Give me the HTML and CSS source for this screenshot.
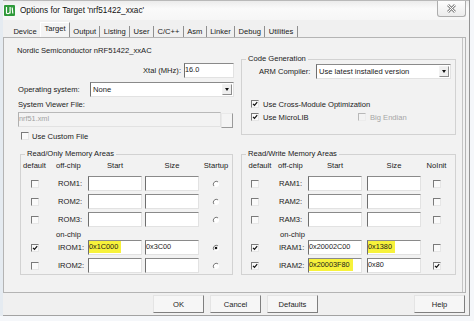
FILE: index.html
```html
<!DOCTYPE html>
<html>
<head>
	<meta charset="utf-8">
	<title>Options for Target</title>
	<link rel="stylesheet" href="styles.css">
</head>
<body>
	<div class="window">
		<div class="titlebar">
			<span class="app-icon">
				<svg width="11" height="11" viewBox="0 0 11 11">
					<rect x="0" y="0" width="11" height="11" rx="1" fill="#2f9a3a"/>
					<path d="M2.5 2v6.5M2.5 8.2c1.5 0.8 3 0.3 3.6-1.2M6.1 2v6.6M8.2 2.5l0.6 6" fill="none" stroke="#fff" stroke-width="1.2"/>
				</svg>
			</span>
			<span class="title">Options for Target 'nrf51422_xxac'</span>
			<span class="close-btn">
				<svg width="11" height="9" viewBox="0 0 11 9">
					<path d="M2 1L9 8M9 1L2 8" stroke="#8c8c8c" stroke-width="2.8"/>
					<path d="M2 1L9 8M9 1L2 8" stroke="#fff" stroke-width="1"/>
				</svg>
			</span>
		</div>

		<div class="client">
			<div class="tabs">
				<span class="tab first">Device</span>
				<span class="tab active">Target</span>
				<span class="tab">Output</span>
				<span class="tab">Listing</span>
				<span class="tab">User</span>
				<span class="tab">C/C++</span>
				<span class="tab">Asm</span>
				<span class="tab">Linker</span>
				<span class="tab">Debug</span>
				<span class="tab">Utilities</span>
			</div>

			<div class="panel">
				<div class="device-name">Nordic Semiconductor nRF51422_xxAC</div>

				<div class="top-row">
					<div class="left-col">
						<div class="xtal-row">
							<label>Xtal (MHz):</label>
							<div class="field xtal-ipt"><span class="val">16.0</span></div>
						</div>
						<div class="os-row">
							<label>Operating system:</label>
							<div class="select"><span class="sel-text">None</span><span class="drop"></span></div>
						</div>
						<div class="svf-label">System Viewer File:</div>
						<div class="svf-row">
							<div class="field disabled"><span class="val">nrf51.xml</span></div>
							<span class="browse-btn"></span>
						</div>
						<div class="check-row custom-file">
							<span class="chk"></span><label>Use Custom File</label>
						</div>
					</div>

					<fieldset class="group codegen">
						<legend>Code Generation</legend>
						<div class="arm-row">
							<label>ARM Compiler:</label>
							<div class="select"><span class="sel-text">Use latest installed version</span><span class="drop"></span></div>
						</div>
						<div class="check-row cross-opt">
							<span class="chk on"><svg viewBox="0 0 6 6"><path d="M1 2.8L2.5 4.4L5.2 1.2" fill="none" stroke="#111" stroke-width="1.2"/></svg></span>
							<label>Use Cross-Module Optimization</label>
						</div>
						<div class="check-pair">
							<div class="check-row">
								<span class="chk on"><svg viewBox="0 0 6 6"><path d="M1 2.8L2.5 4.4L5.2 1.2" fill="none" stroke="#111" stroke-width="1.2"/></svg></span>
								<label>Use MicroLIB</label>
							</div>
							<div class="check-row off">
								<span class="chk"></span>
								<label>Big Endian</label>
							</div>
						</div>
					</fieldset>
				</div>

				<div class="mem-row">
					<fieldset class="group mem-group ro">
						<legend>Read/Only Memory Areas</legend>
						<div class="mem-grid">
							<span class="hd">default</span>
							<span class="hd chip">off-chip</span>
							<span class="hd num">Start</span>
							<span class="hd num">Size</span>
							<span class="hd">Startup</span>

							<span class="def"><span class="chk"></span></span>
							<span class="lbl">ROM1:</span>
							<div class="field"></div>
							<div class="field"></div>
							<span class="opt"><svg class="radio" viewBox="0 0 8 8"><circle cx="4" cy="4" r="3" fill="#fff"/><path d="M6.1 1.9A3 3 0 0 0 1.9 6.1" fill="none" stroke="#6a6a6a" stroke-width="0.9"/></svg></span>

							<span class="def"><span class="chk"></span></span>
							<span class="lbl">ROM2:</span>
							<div class="field"></div>
							<div class="field"></div>
							<span class="opt"><svg class="radio" viewBox="0 0 8 8"><circle cx="4" cy="4" r="3" fill="#fff"/><path d="M6.1 1.9A3 3 0 0 0 1.9 6.1" fill="none" stroke="#6a6a6a" stroke-width="0.9"/></svg></span>

							<span class="def"><span class="chk"></span></span>
							<span class="lbl">ROM3:</span>
							<div class="field"></div>
							<div class="field"></div>
							<span class="opt"><svg class="radio" viewBox="0 0 8 8"><circle cx="4" cy="4" r="3" fill="#fff"/><path d="M6.1 1.9A3 3 0 0 0 1.9 6.1" fill="none" stroke="#6a6a6a" stroke-width="0.9"/></svg></span>

							<span class="hd onchip">on-chip</span>

							<span class="def row-start"><span class="chk on"><svg viewBox="0 0 6 6"><path d="M1 2.8L2.5 4.4L5.2 1.2" fill="none" stroke="#111" stroke-width="1.2"/></svg></span></span>
							<span class="lbl">IROM1:</span>
							<div class="field"><span class="val hl">0x1C000</span></div>
							<div class="field"><span class="val">0x3C00</span></div>
							<span class="opt"><svg class="radio" viewBox="0 0 8 8"><circle cx="4" cy="4" r="3" fill="#fff"/><path d="M6.1 1.9A3 3 0 0 0 1.9 6.1" fill="none" stroke="#6a6a6a" stroke-width="0.9"/><circle cx="4" cy="4" r="1.3" fill="#111"/></svg></span>

							<span class="def"><span class="chk"></span></span>
							<span class="lbl">IROM2:</span>
							<div class="field"></div>
							<div class="field"></div>
							<span class="opt"><svg class="radio" viewBox="0 0 8 8"><circle cx="4" cy="4" r="3" fill="#fff"/><path d="M6.1 1.9A3 3 0 0 0 1.9 6.1" fill="none" stroke="#6a6a6a" stroke-width="0.9"/></svg></span>
						</div>
					</fieldset>

					<fieldset class="group mem-group rw">
						<legend>Read/Write Memory Areas</legend>
						<div class="mem-grid">
							<span class="hd">default</span>
							<span class="hd chip">off-chip</span>
							<span class="hd num">Start</span>
							<span class="hd num">Size</span>
							<span class="hd">NoInit</span>

							<span class="def"><span class="chk"></span></span>
							<span class="lbl">RAM1:</span>
							<div class="field"></div>
							<div class="field"></div>
							<span class="opt"><span class="chk"></span></span>

							<span class="def"><span class="chk"></span></span>
							<span class="lbl">RAM2:</span>
							<div class="field"></div>
							<div class="field"></div>
							<span class="opt"><span class="chk"></span></span>

							<span class="def"><span class="chk"></span></span>
							<span class="lbl">RAM3:</span>
							<div class="field"></div>
							<div class="field"></div>
							<span class="opt"><span class="chk"></span></span>

							<span class="hd onchip">on-chip</span>

							<span class="def row-start"><span class="chk on"><svg viewBox="0 0 6 6"><path d="M1 2.8L2.5 4.4L5.2 1.2" fill="none" stroke="#111" stroke-width="1.2"/></svg></span></span>
							<span class="lbl">IRAM1:</span>
							<div class="field"><span class="val">0x20002C00</span></div>
							<div class="field"><span class="val hl">0x1380</span></div>
							<span class="opt"><span class="chk"></span></span>

							<span class="def"><span class="chk on"><svg viewBox="0 0 6 6"><path d="M1 2.8L2.5 4.4L5.2 1.2" fill="none" stroke="#111" stroke-width="1.2"/></svg></span></span>
							<span class="lbl">IRAM2:</span>
							<div class="field"><span class="val hl">0x20003F80</span></div>
							<div class="field"><span class="val">0x80</span></div>
							<span class="opt"><span class="chk on"><svg viewBox="0 0 6 6"><path d="M1 2.8L2.5 4.4L5.2 1.2" fill="none" stroke="#111" stroke-width="1.2"/></svg></span></span>
						</div>
					</fieldset>
				</div>
			</div>

			<div class="btn-row">
				<button>OK</button>
				<button>Cancel</button>
				<button>Defaults</button>
				<button class="help-btn">Help</button>
			</div>
		</div>
	</div>
</body>
</html>
```

FILE: styles.css
```css
* {
	margin: 0;
	padding: 0;
	box-sizing: border-box;
}
body {
	background: #f5f7fa;
	font-family: "Liberation Sans", Arial, sans-serif;
	font-size: 7.6px;
	color: #1a1a1a;
}

.window {
	width: 470px;
	height: 316px;
	border-left: 3px solid #e5ebf1;
	border-right: 1px solid #939393;
	background: #f0f0f0;
}

/* title bar */
.titlebar {
	display: flex;
	align-items: center;
	height: 20px;
	padding-left: 1px;
	border-top: 1px solid #b9b9b9;
	background: linear-gradient(#ececec, #fafafa 40%, #f6f6f6);
}
.app-icon {
	width: 11px;
	height: 11px;
	margin-right: 5px;
}
.app-icon svg {
	display: block;
}
.title {
	font-size: 8.2px;
	color: #111;
}
.close-btn {
	display: flex;
	align-items: center;
	justify-content: center;
	align-self: flex-start;
	margin-left: auto;
	margin-right: 3px;
	width: 29px;
	height: 16px;
	border: 1px solid #adadad;
	border-top: 0;
	border-radius: 0 0 3px 3px;
	background: linear-gradient(#fdfdfd, #ececec);
}

.client {
	height: 296px;
	padding-top: 1px;
	border-bottom: 1px solid #a3a3a3;
}

/* tabs */
.tabs {
	display: flex;
	align-items: flex-end;
	height: 16px;
	padding-left: 7px;
}
.tab {
	height: 11px;
	padding: 0 3.4px;
	line-height: 11px;
	border-right: 1px solid #8f8f8f;
}
.tab.first {
	border-right: 0;
}
.tab.active {
	height: 15px;
	padding-bottom: 3px;
	line-height: 12px;
	border-left: 1px solid #fff;
	border-top: 1px solid #fff;
	background: #f4f4f4;
}

.panel {
	width: 463px;
	height: 256px;
	padding: 6px 0 0 13px;
	border: 1px solid #b4b4b4;
	background: #f2f2f2;
	box-shadow: inset -2px 0 0 #f2f2f2, inset -3px 0 0 #c4c4c4;
}
.device-name {
	height: 10px;
	line-height: 13px;
}

.top-row {
	display: flex;
	gap: 7px;
}
.left-col {
	width: 217px;
}
.xtal-row {
	display: flex;
	justify-content: flex-end;
	align-items: center;
	height: 16px;
	margin-top: 8px;
}
.xtal-row label {
	margin-right: 3px;
}
.xtal-ipt {
	width: 50px;
	height: 16px;
}
.os-row {
	display: flex;
	align-items: center;
	height: 16px;
	margin-top: 3px;
}
.os-row label {
	width: 73px;
	padding-left: 1px;
}
.os-row .select {
	flex: 1;
}
.svf-label {
	height: 10px;
	margin-top: 3px;
	padding-left: 1px;
	line-height: 10px;
}
.svf-row {
	display: flex;
	height: 16px;
	margin-top: 2px;
	padding-left: 1px;
}
.svf-row .field {
	width: 203px;
}
.browse-btn {
	width: 12px;
	height: 15px;
	margin-top: 1px;
	border: 1px solid;
	border-color: #e9e9e9 #9a9a9a #9a9a9a #e9e9e9;
	background: #f4f4f4;
}

/* inputs */
.field {
	height: 15px;
	border: 1px solid;
	border-color: #8a8a8a #e2e2e2 #e2e2e2 #6f6f6f;
	background: #fff;
	font-size: 7.3px;
	overflow: hidden;
}
.field .val {
	display: inline-block;
	padding-right: 3px;
	line-height: 12px;
}
.field.disabled {
	border-color: #b9b9b9 #e2e2e2 #e2e2e2 #b0b0b0;
	background: #f3f3f3;
	color: #a2a2a2;
}
.val.hl {
	background: #f7f23b;
}
.select {
	display: flex;
	align-items: center;
	height: 15px;
	padding: 0 1px 0 2px;
	border: 1px solid;
	border-color: #8a8a8a #e2e2e2 #e2e2e2 #6f6f6f;
	background: #fff;
}
.drop {
	display: flex;
	align-items: center;
	justify-content: center;
	width: 10px;
	height: 11px;
	margin-left: auto;
	border: 1px solid;
	border-color: #f2f2f2 #8c8c8c #8c8c8c #f2f2f2;
	background: #efefef;
}
.drop::after {
	content: "";
	border-left: 2.5px solid transparent;
	border-right: 2.5px solid transparent;
	border-top: 3px solid #111;
}

/* checkboxes */
.check-row {
	display: flex;
	align-items: center;
	height: 10px;
}
.check-row label {
	margin-left: 4px;
}
.chk {
	display: inline-block;
	flex: none;
	width: 8px;
	height: 8px;
	border: 1px solid;
	border-color: #7a7a7a #e6e6e6 #e6e6e6 #7a7a7a;
	background: #fafafa;
}
.chk svg {
	display: block;
	width: 6px;
	height: 6px;
}
.custom-file {
	margin-top: 3px;
	padding-left: 4px;
}
.custom-file label {
	margin-left: 3px;
}
.check-row.off label {
	color: #a6a6a6;
}
.check-row.off .chk {
	border-color: #b8b8b8 #ececec #ececec #b8b8b8;
	background: #f3f3f3;
}

/* groups */
.group {
	margin: 0;
	padding: 0;
	border: 1px solid #d2d2d2;
	min-width: 0;
}
.group legend {
	margin-left: 4px;
	padding: 0 2px;
	line-height: 10px;
}
.codegen {
	width: 215px;
	height: 81px;
}
.arm-row {
	display: flex;
	align-items: center;
	height: 15px;
	padding-left: 17px;
}
.arm-row label {
	width: 57px;
}
.arm-row .select {
	width: 135px;
}
.cross-opt {
	margin-top: 20px;
	padding-left: 9px;
}
.check-pair {
	display: grid;
	grid-template-columns: 107px auto;
	margin-top: 3px;
	padding-left: 9px;
}

.mem-row {
	display: flex;
	gap: 8px;
	margin: 8px 0 0 3px;
}
.mem-group.ro {
	width: 213px;
	height: 126px;
}
.mem-group.rw {
	width: 215px;
	height: 126px;
}
.mem-grid {
	display: grid;
	grid-template-rows: 12px 15px 15px 15px 7px 15px 15px;
	row-gap: 3px;
	align-items: center;
	padding-top: 2px;
}
.ro .mem-grid {
	grid-template-columns: 27px 40px 57px 55px 32px;
}
.rw .mem-grid {
	grid-template-columns: 36px 30px 59px 59px 21px;
}
.hd {
	align-self: start;
	line-height: 10px;
	text-align: center;
}
.hd.num {
	width: 54px;
}
.ro .hd.chip {
	padding-left: 8px;
	text-align: left;
}
.rw .hd.chip {
	text-align: left;
}
.hd.onchip {
	grid-column: 2;
	line-height: 9px;
}
.ro .hd.onchip {
	padding-left: 8px;
	text-align: left;
}
.rw .hd.onchip {
	padding-left: 2px;
	text-align: left;
}
.row-start {
	grid-column: 1;
}
.lbl {
	padding-left: 10px;
}
.rw .lbl {
	padding-left: 1px;
}
.mem-grid .field {
	width: 54px;
}
.def,
.opt {
	display: flex;
	justify-content: center;
}
.rw .def {
	justify-content: flex-start;
	padding-left: 9px;
}
.radio {
	display: block;
	width: 8px;
	height: 8px;
}

/* bottom buttons */
.btn-row {
	display: flex;
	gap: 6px;
	margin-top: 2px;
	padding: 0 4px 0 150px;
}
.btn-row button {
	width: 51px;
	height: 18px;
	font: inherit;
	color: #1d1d1d;
	border: 1px solid;
	border-color: #e4e4e4 #7f7f7f #7f7f7f #e4e4e4;
	background: #f6f6f6;
}
.btn-row .help-btn {
	margin-left: auto;
}
```
